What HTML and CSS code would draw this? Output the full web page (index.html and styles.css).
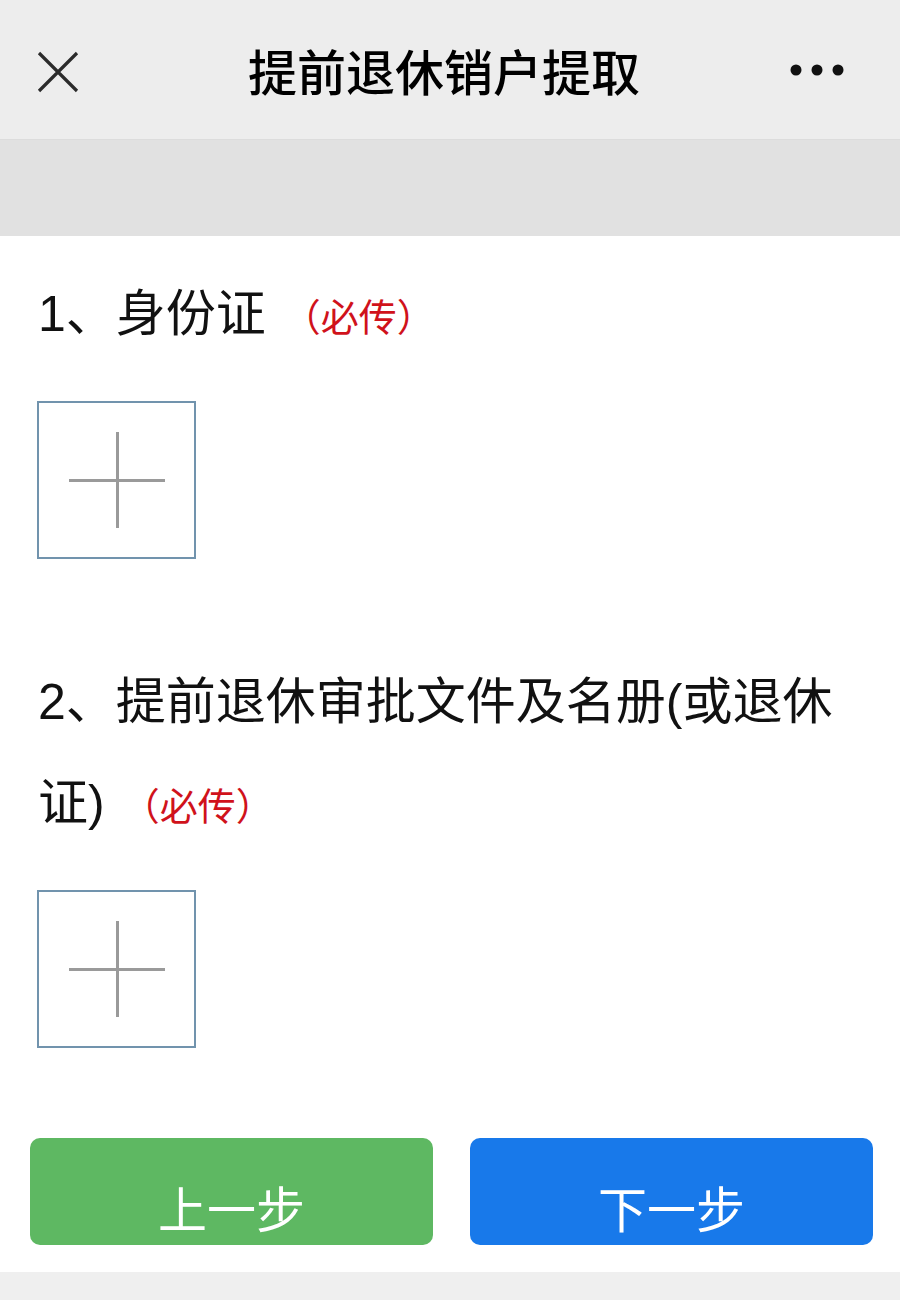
FILE: index.html
```html
<!DOCTYPE html>
<html lang="zh-CN">
<head>
    <meta charset="UTF-8">
    <meta name="viewport" content="width=device-width, initial-scale=1.0">
    <title>提前退休销户提取</title>
    <link rel="stylesheet" href="styles.css">
</head>
<body>
    <header class="nav-bar">
        <button class="nav-btn close-btn" aria-label="关闭">
            <svg width="42" height="42" viewBox="0 0 42 42">
                <path d="M2 2 L40 40 M40 2 L2 40" stroke="#2b2b2b" stroke-width="3.2" fill="none"/>
            </svg>
        </button>
        <h1 class="nav-title">提前退休销户提取</h1>
        <button class="nav-btn more-btn" aria-label="更多">
            <svg width="54" height="14" viewBox="0 0 54 14">
                <circle cx="6" cy="7" r="5.5" fill="#111"/>
                <circle cx="27" cy="7" r="5.5" fill="#111"/>
                <circle cx="48" cy="7" r="5.5" fill="#111"/>
            </svg>
        </button>
    </header>
    <div class="banner"></div>

    <main class="content">
        <section class="upload-field">
            <h3 class="field-title">1、身份证<span class="required">（必传）</span></h3>
            <div class="upload-box"><span class="plus"></span></div>
        </section>

        <section class="upload-field">
            <h3 class="field-title">2、提前退休审批文件及名册(或退休证)<span class="required">（必传）</span></h3>
            <div class="upload-box"><span class="plus"></span></div>
        </section>
    </main>

    <div class="button-group">
        <button class="step-btn prev-btn">上一步</button>
        <button class="step-btn next-btn">下一步</button>
    </div>
    <div class="bottom-bar"></div>
</body>
</html>
```

FILE: styles.css
```css
:root {
    --nav-bg: #ededed;
    --banner-bg: #e1e1e1;
    --text-color: #111;
    --required-color: #d0121b;
    --box-border: #7193ad;
    --plus-color: #9a9a9a;
    --green: #5eb862;
    --blue: #1879ea;
}

* {
    margin: 0;
    padding: 0;
    box-sizing: border-box;
}

body {
    width: 900px;
    font-family: "Liberation Sans", "Noto Sans CJK SC", sans-serif;
    color: var(--text-color);
    background: #fff;
}

.nav-bar {
    height: 140px;
    display: grid;
    grid-template-columns: 150px 1fr 150px;
    align-items: center;
    background: var(--nav-bg);
    border-bottom: 1px solid #dcdcdc;
}

.nav-btn {
    border: none;
    background: none;
    display: flex;
    align-items: center;
}

.close-btn {
    padding-left: 37px;
    padding-top: 4px;
}

.more-btn {
    justify-content: flex-end;
    padding-right: 56px;
}

.nav-title {
    text-align: center;
    font-family: "Noto Sans CJK SC", sans-serif;
    font-size: 49px;
    font-weight: 500;
    color: #000;
    padding-right: 12px;
}

.banner {
    height: 96px;
    background: var(--banner-bg);
}

.content {
    padding: 28px 38px 0;
}

.upload-field + .upload-field {
    margin-top: 93px;
}

.field-title {
    font-size: 50px;
    font-weight: 400;
    line-height: 101px;
    margin-bottom: 36px;
}

.required {
    display: inline-block;
    font-size: 38px;
    line-height: 1;
    color: var(--required-color);
    margin-left: 17px;
}

.upload-box {
    width: 159px;
    height: 158px;
    margin-left: -1px;
    border: 2px solid var(--box-border);
    display: flex;
    align-items: center;
    justify-content: center;
}

.plus {
    position: relative;
    width: 96px;
    height: 96px;
}

.plus::before,
.plus::after {
    content: "";
    position: absolute;
    background: var(--plus-color);
}

.plus::before {
    left: 0;
    right: 0;
    top: 47px;
    height: 3px;
}

.plus::after {
    top: 0;
    bottom: 0;
    left: 47px;
    width: 3px;
}

.button-group {
    display: flex;
    gap: 37px;
    padding: 90px 27px 27px 30px;
}

.step-btn {
    flex: 1;
    height: 107px;
    border: none;
    border-radius: 10px;
    color: #fff;
    font-family: "Noto Sans CJK SC", sans-serif;
    font-size: 49px;
    padding-top: 30px;
}

.prev-btn {
    background: var(--green);
}

.next-btn {
    background: var(--blue);
}

.bottom-bar {
    height: 28px;
    background: #efefef;
}
```
